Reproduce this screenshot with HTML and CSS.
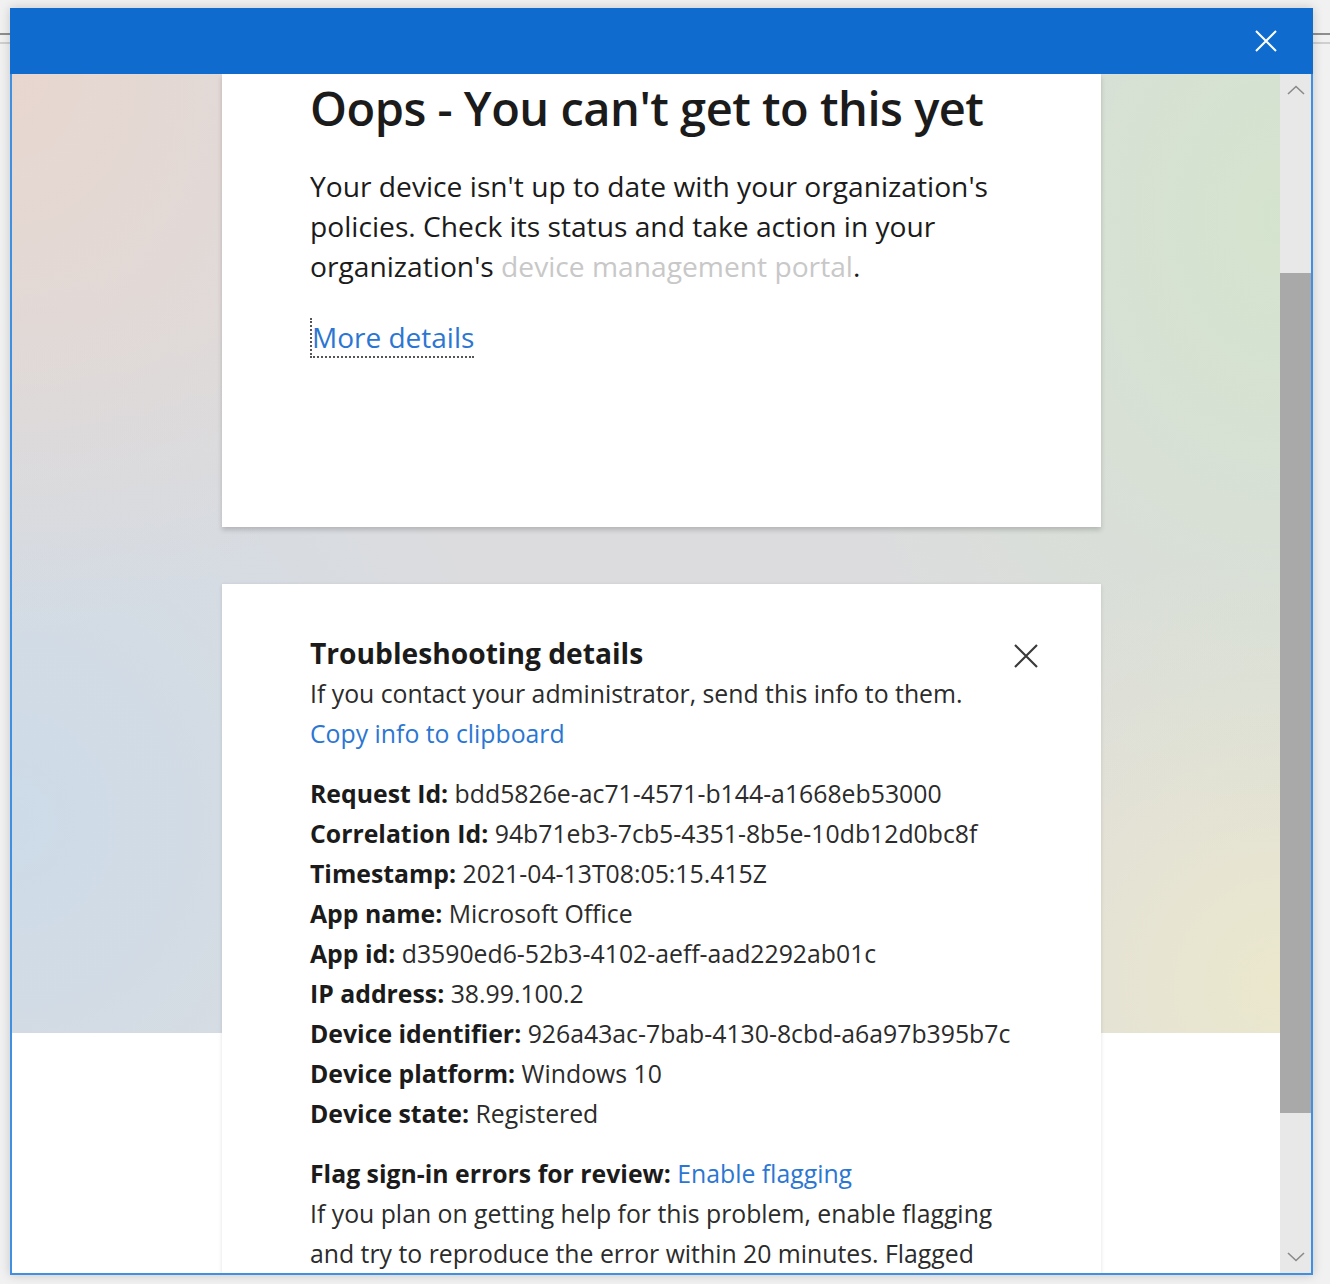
FILE: index.html
```html
<!DOCTYPE html>
<html lang="en">
<head>
<meta charset="utf-8">
<title>Oops - You can't get to this yet</title>
<link rel="stylesheet" href="styles.css">
</head>
<body>
<div class="window">
  <div class="titlebar">
    <svg class="title-close" width="24" height="24" viewBox="0 0 24 24"><path d="M2 2 L22 22 M22 2 L2 22" stroke="#ffffff" stroke-width="2" fill="none"/></svg>
  </div>
  <div class="client">
    <div class="viewport">
      <div class="backdrop">
        <section class="card card-top">
          <h1 class="title">Oops - You can't get to this yet</h1>
          <p class="lead">Your device isn't up to date with your organization's policies. Check its status and take action in your organization's <a class="portal" href="#">device management portal</a>.</p>
          <a class="more" href="#">More details</a>
        </section>
        <section class="card card-details">
          <div class="details-head">
            <h2 class="details-title">Troubleshooting details</h2>
            <svg class="details-close" width="26" height="26" viewBox="0 0 26 26"><path d="M2 2 L24 24 M24 2 L2 24" stroke="#3a3a3a" stroke-width="2.2" fill="none"/></svg>
          </div>
          <p class="line">If you contact your administrator, send this info to them.</p>
          <p class="line"><a class="link" href="#">Copy info to clipboard</a></p>
          <div class="info">
            <p class="line"><b>Request Id:</b> bdd5826e-ac71-4571-b144-a1668eb53000</p>
            <p class="line"><b>Correlation Id:</b> 94b71eb3-7cb5-4351-8b5e-10db12d0bc8f</p>
            <p class="line"><b>Timestamp:</b> 2021-04-13T08:05:15.415Z</p>
            <p class="line"><b>App name:</b> Microsoft Office</p>
            <p class="line"><b>App id:</b> d3590ed6-52b3-4102-aeff-aad2292ab01c</p>
            <p class="line"><b>IP address:</b> 38.99.100.2</p>
            <p class="line"><b>Device identifier:</b> 926a43ac-7bab-4130-8cbd-a6a97b395b7c</p>
            <p class="line"><b>Device platform:</b> Windows 10</p>
            <p class="line"><b>Device state:</b> Registered</p>
          </div>
          <div class="flag">
            <p class="line"><b>Flag sign-in errors for review:</b> <a class="link" href="#">Enable flagging</a></p>
            <p class="line wrap">If you plan on getting help for this problem, enable flagging and try to reproduce the error within 20 minutes. Flagged events make diagnostics available and are raised to admin attention.</p>
          </div>
        </section>
      </div>
    </div>
    <div class="scrollbar">
      <svg class="arrow" width="18" height="10" viewBox="0 0 18 10"><path d="M1 9 L9 1.5 L17 9" stroke="#8a8a8a" stroke-width="1.6" fill="none"/></svg>
      <div class="track"><div class="thumb"></div></div>
      <svg class="arrow" width="18" height="10" viewBox="0 0 18 10"><path d="M1 1 L9 8.5 L17 1" stroke="#8a8a8a" stroke-width="1.6" fill="none"/></svg>
    </div>
  </div>
</div>
</body>
</html>
```
FILE: styles.css
```css
html, body {
  margin: 0;
  padding: 0;
}
body {
  width: 1330px;
  height: 1284px;
  overflow: hidden;
  background:
    linear-gradient(to bottom, transparent 33px, #8e8e8e 33px, #8e8e8e 35px, transparent 35px, transparent 42px, #cfcfcf 42px, #cfcfcf 44px, transparent 44px),
    #f1f1f1;
  font-family: "Open Sans", "Noto Sans", "Liberation Sans", sans-serif;
  color: #1b1b1b;
  padding: 8px 0 0 10px;
  box-sizing: border-box;
}
.window {
  width: 1303px;
  height: 1267px;
  display: flex;
  flex-direction: column;
  box-shadow: 0 0 10px rgba(0, 0, 0, 0.18);
}
.titlebar {
  height: 66px;
  flex: none;
  background: #0f6cce;
  display: flex;
  align-items: center;
  justify-content: flex-end;
  padding-right: 35px;
}
.client {
  flex: 1;
  display: flex;
  min-height: 0;
  border: 2px solid #3f8fe3;
  border-top: none;
}
.viewport {
  flex: 1;
  overflow: hidden;
  background: #ffffff;
}
.backdrop {
  height: 959px;
  padding-left: 210px;
  background:
    radial-gradient(ellipse 460px 560px at 0% 0%, rgba(232, 214, 206, 0.95), rgba(232, 214, 206, 0) 100%),
    radial-gradient(ellipse 520px 560px at 0% 78%, rgba(204, 219, 233, 0.95), rgba(204, 219, 233, 0) 100%),
    radial-gradient(ellipse 480px 640px at 100% 15%, rgba(212, 228, 205, 0.95), rgba(212, 228, 205, 0) 100%),
    radial-gradient(ellipse 440px 440px at 100% 95%, rgba(236, 232, 204, 0.95), rgba(236, 232, 204, 0) 100%),
    #dcdcde;
}
.card {
  width: 879px;
  box-sizing: border-box;
  background: #ffffff;
  padding-left: 88px;
}
.card-top {
  height: 453px;
  padding-top: 6px;
  box-shadow: 0 3px 5px rgba(0, 0, 0, 0.18);
}
.title {
  margin: 0;
  font-size: 47px;
  line-height: 56px;
  font-weight: 600;
  letter-spacing: -0.5px;
  color: #1b1b1b;
}
.lead {
  margin: 30px 0 0;
  font-size: 28.2px;
  line-height: 40px;
  width: 740px;
  color: #1b1b1b;
}
.portal {
  color: #c8c8c8;
  text-decoration: none;
}
.more {
  display: inline-block;
  margin-top: 32px;
  font-size: 28px;
  line-height: 38px;
  color: #2b76d2;
  text-decoration: none;
  border-left: 2px dotted #555;
  border-bottom: 2px dotted #555;
}
.card-details {
  margin-top: 57px;
  height: 720px;
  padding-top: 49px;
  padding-right: 62px;
  box-shadow: 0 1px 4px rgba(0, 0, 0, 0.12);
}
.details-head {
  display: flex;
  justify-content: space-between;
  align-items: center;
  height: 40px;
}
.details-title {
  margin: 0;
  font-size: 28.2px;
  line-height: 40px;
  font-weight: 700;
}
.details-close {
  margin-top: 5px;
}
.line {
  margin: 0;
  font-size: 24.8px;
  line-height: 40px;
  color: #2b2b2b;
  width: 730px;
  white-space: nowrap;
}
.line b {
  color: #1b1b1b;
  font-weight: 700;
}
.link {
  color: #2b76d2;
  text-decoration: none;
}
.info {
  margin-top: 20px;
}
.flag {
  margin-top: 20px;
}
.flag .wrap {
  white-space: normal;
  width: 700px;
}
.scrollbar {
  width: 31px;
  flex: none;
  background: #e8e8e8;
  display: flex;
  flex-direction: column;
  align-items: center;
}
.arrow {
  flex: none;
  margin: 11px 0;
}
.track {
  flex: 1;
  width: 100%;
  padding-top: 167px;
  padding-bottom: 128px;
  box-sizing: border-box;
  display: flex;
}
.thumb {
  flex: 1;
  background: #a9a9a9;
}
```
